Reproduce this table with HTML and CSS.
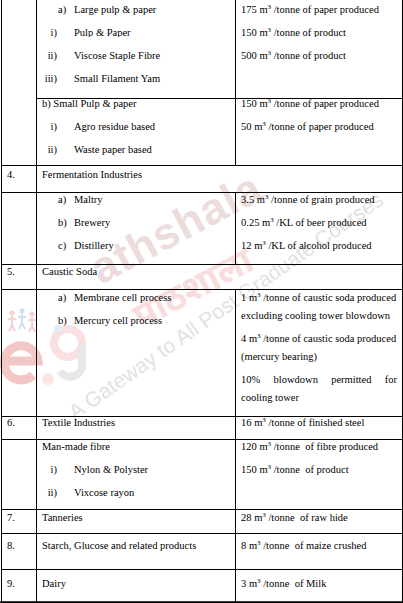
FILE: index.html
```html
<!DOCTYPE html>
<html lang="en">
<head>
<meta charset="utf-8">
<title>Water consumption table</title>
<link rel="stylesheet" href="styles.css">
</head>
<body>
<div class="page">
  <div class="wm" aria-hidden="true">
    <svg class="wm-logo" width="110" height="85" viewBox="0 0 110 85">
      <g opacity="0.32">
        <circle cx="12" cy="8" r="2.5" fill="#e57373"/>
        <path d="M12 11 L12 20 M8 14 L16 14 M12 20 L9 26 M12 20 L15 26" stroke="#e57373" stroke-width="2" fill="none"/>
        <circle cx="22" cy="6" r="2.5" fill="#64a0d8"/>
        <path d="M22 9 L22 18 M18 12 L26 12 M22 18 L19 24 M22 18 L25 24" stroke="#64a0d8" stroke-width="2" fill="none"/>
        <circle cx="32" cy="9" r="2.5" fill="#e57373"/>
        <path d="M32 12 L32 21 M28 15 L36 15 M32 21 L29 27 M32 21 L35 27" stroke="#e57373" stroke-width="2" fill="none"/>
        <path d="M6 56 L38 56 A17 17 0 1 0 33 70" stroke="#e05555" stroke-width="9" fill="none"/>
        <circle cx="68" cy="38" r="14" stroke="#f0a0a0" stroke-width="8" fill="none"/>
        <path d="M82 38 L82 62 A12 12 0 0 1 60 66" stroke="#b8b8b8" stroke-width="8" fill="none"/>
        <circle cx="58" cy="24" r="4" fill="#9ccfe8"/>
        <circle cx="48" cy="74" r="6" fill="#f4b0a0"/>
      </g>
    </svg>
    <div class="wm-brand">athshala</div>
    <div class="wm-hindi">पाठशाला</div>
    <div class="wm-tag">A Gateway to All Post Graduate Courses</div>
  </div>

  <table class="tbl">
    <colgroup><col class="c1"><col class="c2"><col class="c3"></colgroup>
    <tr class="rA">
      <td rowspan="2"></td>
      <td>
        <div class="item"><span class="m alpha">a)</span><span>Large pulp &amp; paper</span></div>
        <div class="item"><span class="m roman">i)</span><span class="clip">Pulp &amp; Paper</span></div>
        <div class="item"><span class="m roman">ii)</span><span>Viscose Staple Fibre</span></div>
        <div class="item"><span class="m roman">iii)</span><span>Small Filament Yam</span></div>
      </td>
      <td>
        <p>175 m<sup>3</sup> /tonne of paper produced</p>
        <p><span class="clip">150 m<sup>3</sup> /tonne of product</span></p>
        <p>500 m<sup>3</sup> /tonne of product</p>
      </td>
    </tr>
    <tr class="rB">
      <td>
        <p>b) Small Pulp &amp; paper</p>
        <div class="item"><span class="m roman">i)</span><span>Agro residue based</span></div>
        <div class="item"><span class="m roman">ii)</span><span>Waste paper based</span></div>
      </td>
      <td>
        <p>150 m<sup>3</sup> /tonne of paper produced</p>
        <p>50 m<sup>3</sup> /tonne of paper produced</p>
      </td>
    </tr>
    <tr class="r4">
      <td><p>4.</p></td>
      <td colspan="2"><p>Fermentation Industries</p></td>
    </tr>
    <tr class="rF">
      <td></td>
      <td>
        <div class="item"><span class="m alpha">a)</span><span>Maltry</span></div>
        <div class="item"><span class="m alpha">b)</span><span>Brewery</span></div>
        <div class="item"><span class="m alpha">c)</span><span>Distillery</span></div>
      </td>
      <td>
        <p>3.5 m<sup>3</sup> /tonne of grain produced</p>
        <p>0.25 m<sup>3</sup> /KL of beer produced</p>
        <p>12 m<sup>3</sup> /KL of alcohol produced</p>
      </td>
    </tr>
    <tr class="r5">
      <td><p>5.</p></td>
      <td colspan="2"><p>Caustic Soda</p></td>
    </tr>
    <tr class="rC">
      <td></td>
      <td>
        <div class="item"><span class="m alpha">a)</span><span>Membrane cell process</span></div>
        <div class="item"><span class="m alpha">b)</span><span>Mercury cell process</span></div>
      </td>
      <td>
        <p class="nw">1 m<sup>3</sup> /tonne of caustic soda produced<br>excluding cooling tower blowdown</p>
        <p class="nw">4 m<sup>3</sup> /tonne of caustic soda produced<br>(mercury bearing)</p>
        <p><span class="jline">10% blowdown permitted for</span>cooling tower</p>
      </td>
    </tr>
    <tr class="r6">
      <td><p>6.</p></td>
      <td><p>Textile Industries</p></td>
      <td><p>16 m<sup>3</sup> /tonne of finished steel</p></td>
    </tr>
    <tr class="rM">
      <td></td>
      <td>
        <p>Man-made fibre</p>
        <div class="item"><span class="m roman">i)</span><span>Nylon &amp; Polyster</span></div>
        <div class="item"><span class="m roman">ii)</span><span>Vixcose rayon</span></div>
      </td>
      <td>
        <p>120 m<sup>3</sup> /tonne&nbsp; of fibre produced</p>
        <p>150 m<sup>3</sup> /tonne&nbsp; of product</p>
      </td>
    </tr>
    <tr class="r7">
      <td><p>7.</p></td>
      <td><p>Tanneries</p></td>
      <td><p>28 m<sup>3</sup> /tonne&nbsp; of raw hide</p></td>
    </tr>
    <tr class="r8">
      <td><p>8.</p></td>
      <td><p>Starch, Glucose and related products</p></td>
      <td><p>8 m<sup>3</sup> /tonne&nbsp; of maize crushed</p></td>
    </tr>
    <tr class="r9">
      <td><p>9.</p></td>
      <td><p>Dairy</p></td>
      <td><p>3 m<sup>3</sup> /tonne&nbsp; of Milk</p></td>
    </tr>
  </table>
  <div class="edge"></div>
</div>
</body>
</html>
```

FILE: styles.css
```css
html, body {
  margin: 0;
  padding: 0;
  background: #ffffff;
}

.page {
  position: relative;
  width: 403px;
  height: 603px;
  overflow: hidden;
  background: #ffffff;
  font-family: "Liberation Serif", "Times New Roman", serif;
  font-size: 10.5px;
  line-height: 18px;
  color: #000000;
}

/* ---------- watermark ---------- */
.wm {
  position: absolute;
  inset: 0;
  z-index: 0;
  pointer-events: none;
}

.wm-logo {
  position: absolute;
  left: 0;
  top: 305px;
}

.wm-brand,
.wm-hindi,
.wm-tag {
  position: absolute;
  white-space: nowrap;
  transform: translate(-50%, -50%) rotate(-28deg);
}

.wm-brand {
  left: 176px;
  top: 228px;
  font-family: "Liberation Sans", Arial, sans-serif;
  font-weight: 700;
  font-size: 44px;
  line-height: 44px;
  color: #eddcdc;
  letter-spacing: 1px;
}

.wm-hindi {
  left: 195px;
  top: 292px;
  font-family: "Noto Sans Devanagari", "Noto Sans", "DejaVu Sans", sans-serif;
  font-weight: 700;
  font-size: 36px;
  line-height: 40px;
  color: #f9dddd;
}

.wm-tag {
  left: 226px;
  top: 306px;
  transform: translate(-50%, -50%) rotate(-35deg);
  font-family: "Liberation Sans", Arial, sans-serif;
  font-size: 21px;
  line-height: 24px;
  color: #e2e2e2;
}

/* ---------- table ---------- */
.tbl {
  position: relative;
  z-index: 1;
  margin: -1px 0 0 1px;
  width: 401px;
  border-collapse: collapse;
  table-layout: fixed;
}

.c1 { width: 35px; }
.c2 { width: 199px; }
.c3 { width: 167px; }

.tbl td {
  border: 1px solid #000000;
  padding: 0 5px;
  vertical-align: top;
}

.tbl p {
  margin: 0 0 5px 0;
}

.item {
  display: flex;
  margin: 0 0 5px 0;
}

.m {
  flex: none;
  width: 32px;
  box-sizing: border-box;
}

.m.alpha {
  padding-left: 16px;
}

.m.roman {
  text-align: right;
  padding-right: 17px;
}

sup {
  font-size: 7px;
  line-height: 0;
  vertical-align: baseline;
  position: relative;
  top: -4px;
}

.clip {
  display: inline-block;
  height: 13px;
  overflow: hidden;
  vertical-align: top;
}

.nw {
  white-space: nowrap;
}

.jline {
  display: block;
  text-align: justify;
  text-align-last: justify;
}

/* row heights and first-line offsets */
.rA { height: 99px; }
.rA td > :first-child { margin-top: 1px; }
.rB { height: 67px; }
.rB td > :first-child { margin-top: -4px; }
.r4 { height: 27px; }
.rF { height: 72px; }
.rF td > :first-child { margin-top: -2px; }
.r5 { height: 25px; }
.r5 td > :first-child { margin-top: -2px; }
.rC { height: 127px; }
.rC td > :first-child { margin-top: -1px; }
.r6 { height: 23px; }
.r6 td > :first-child { margin-top: -3px; }
.rM { height: 70px; }
.rM td > :first-child { margin-top: -2px; }
.r7 { height: 24px; }
.r7 td > :first-child { margin-top: -1px; }
.r8 { height: 36px; }
.r8 td > :first-child { margin-top: 3px; }
.r9 { height: 33px; }
.r9 td > :first-child { margin-top: 5px; }

.edge {
  position: absolute;
  left: 0;
  right: 0;
  bottom: 0;
  height: 2px;
  background: #3a3a3a;
}
```
